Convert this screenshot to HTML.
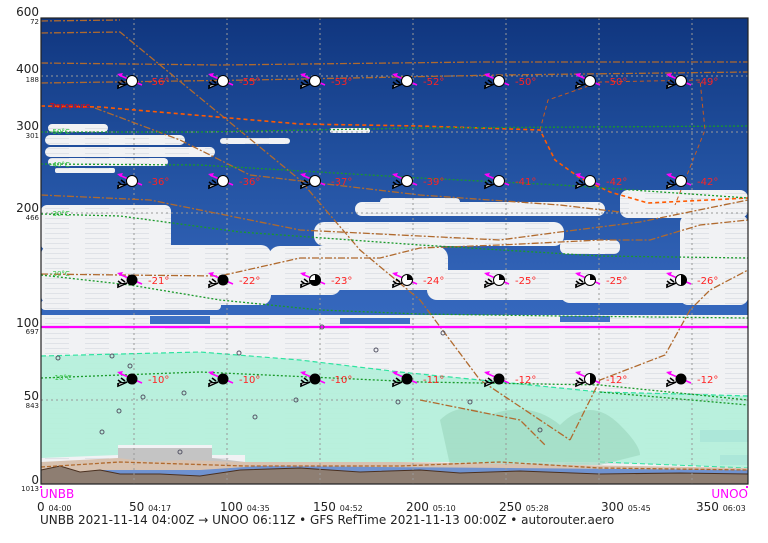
<!DOCTYPE html>
<html><head><meta charset="utf-8"><style>
html,body{margin:0;padding:0;background:#fff;width:768px;height:543px;overflow:hidden}
svg{display:block}
text{font-family:"DejaVu Sans","Liberation Sans",sans-serif}
</style></head><body>
<svg width="768" height="543" viewBox="0 0 768 543" xmlns="http://www.w3.org/2000/svg">
<defs>
<linearGradient id="sky" x1="0" y1="0" x2="0" y2="1">
<stop offset="0" stop-color="#10367f"/><stop offset="0.3" stop-color="#21509f"/><stop offset="0.6" stop-color="#3466bb"/><stop offset="1" stop-color="#3e72c6"/></linearGradient>
<pattern id="cl" width="40" height="5" patternUnits="userSpaceOnUse"><rect width="40" height="5" fill="#f1f2f4"/><rect x="5" y="3" width="24" height="1" fill="#dfe2e7"/></pattern>
<g id="bw"><line x1="-13" y1="-6" x2="10" y2="4" stroke="#f0f" stroke-width="1.6"/><path d="M-15,-7 l6,-1 l-2,4z" fill="#f0f"/><path d="M-5,3 l-9,4 l0,-3 M-7,2 l-4,-3 M-10,4 l-4,-3" stroke="#000" stroke-width="1.6" fill="none"/><path d="M-14,7 l9,-4 l-8,1z" fill="#fff" stroke="#000" stroke-width="1"/></g>
</defs>
<rect x="41" y="18" width="707" height="466" fill="url(#sky)"/>
<!-- clouds -->
<g fill="url(#cl)">
<rect x="48" y="124" width="60" height="8" rx="4"/>
<rect x="45" y="135" width="140" height="10" rx="5"/>
<rect x="45" y="147" width="170" height="10" rx="5"/>
<rect x="48" y="158" width="120" height="8" rx="4"/>
<rect x="55" y="168" width="60" height="5" rx="2"/>
<rect x="220" y="138" width="70" height="6" rx="3"/>
<rect x="330" y="128" width="40" height="5" rx="2"/>
<!-- left big cloud -->
<rect x="41" y="205" width="130" height="45" rx="6"/>
<rect x="41" y="245" width="230" height="60" rx="10"/>
<rect x="41" y="265" width="300" height="30" rx="10"/>
<rect x="41" y="300" width="180" height="10" rx="4"/>
<!-- middle -->
<rect x="355" y="202" width="250" height="14" rx="7"/>
<rect x="380" y="198" width="80" height="8" rx="4"/>
<rect x="314" y="222" width="250" height="24" rx="10"/>
<rect x="268" y="246" width="180" height="44" rx="12"/>
<rect x="427" y="270" width="170" height="30" rx="10"/>
<rect x="560" y="270" width="188" height="33" rx="10"/>
<rect x="620" y="190" width="128" height="28" rx="8"/>
<rect x="680" y="215" width="68" height="90" rx="8"/>
<rect x="560" y="240" width="60" height="14" rx="6"/>
<!-- bottom strip -->
<rect x="41" y="315" width="707" height="170"/>
</g>
<path d="M150,316 h60 v8 h-60z M340,318 h70 v6 h-70z M560,316 h50 v6 h-50z" fill="#3e72c6"/>
<path d="M700,430 h48 v12 h-48z M720,455 h28 v10 h-28z" fill="#4b86cf"/>
<!-- green region -->
<path d="M41,356 L120,354 L200,352 L300,360 L400,372 L480,380 L560,388 L600,392 L680,394 L748,396 L748,468 L600,462 L520,462 L400,462 L290,462 L245,462 L245,455 L212,455 L212,445 L118,445 L118,455 L41,458Z" fill="#b4f0da" opacity="0.92"/>
<path d="M41,356 L120,354 L200,352 L300,360 L400,372 L480,380 L560,388 L600,392 L680,394 L748,396" stroke="#2fe3a0" stroke-width="1.2" stroke-dasharray="5,3" fill="none"/>
<path d="M600,462 L748,468" stroke="#2fe3a0" stroke-dasharray="5,3" fill="none"/>
<path d="M440,420 q20,-20 50,-5 q40,-15 70,10 q30,-30 60,0 q20,20 20,30 l-40,10 l-150,0z" fill="#9ed8c0" opacity="0.7"/>
<!-- terrain -->
<path d="M118,448 L212,448 L212,458 L245,462 L245,484 L118,484z" fill="#c4c4c4"/>
<path d="M41,462 L118,458 L150,462 L180,460 L245,462 L400,462 L748,468 L748,484 L41,484z" fill="#d8c2b0"/>
<path d="M95,470 L200,470 L260,466 L748,470 L748,476 L95,476z" fill="#6f92d0"/>
<path d="M41,470 L60,466 L80,472 L100,470 L120,474 L160,474 L200,476 L240,470 L300,468 L360,472 L420,470 L460,473 L520,471 L600,474 L680,473 L748,474 L748,484 L41,484z" fill="#8e7e72" stroke="#4a3020" stroke-width="1"/>
<!-- grid -->
<g stroke="#999" stroke-width="1" stroke-dasharray="2,3">
<line x1="134" y1="18" x2="134" y2="484"/><line x1="227" y1="18" x2="227" y2="484"/><line x1="320" y1="18" x2="320" y2="484"/><line x1="413" y1="18" x2="413" y2="484"/><line x1="506" y1="18" x2="506" y2="484"/><line x1="599" y1="18" x2="599" y2="484"/><line x1="692" y1="18" x2="692" y2="484"/>
<line x1="41" y1="76" x2="748" y2="76"/><line x1="41" y1="132" x2="748" y2="132"/><line x1="41" y1="213" x2="748" y2="213"/><line x1="41" y1="400" x2="748" y2="400"/>
</g>
<!-- brown dash-dot lines -->
<g stroke="#b06a2e" stroke-width="1.3" stroke-dasharray="7,2,2,2" fill="none">
<path d="M41,21 L120,20"/>
<path d="M41,33 L120,32 L300,180 L360,250 L420,300 L480,380 L570,440"/>
<path d="M41,63 L220,65 L480,62 L748,62"/>
<path d="M41,83 L250,80 L500,75 L748,72"/>
<path d="M95,108 L180,140 L250,175 L420,195 L560,205 L620,212"/>
<path d="M41,195 L150,200 L300,230 L500,240 L560,232 L640,222 L748,200"/>
<path d="M41,274 L120,275 L220,276 L300,258 L380,258 L420,248 L500,245 L600,240 L650,240 L700,225 L748,220"/>
<path d="M570,440 L600,380 L665,355 L690,310 L710,290 L748,270"/>
<path d="M420,400 L520,420 L545,445"/>
<path d="M41,467 L120,462 L245,466 L400,466 L500,462 L600,468 L748,470" stroke-dasharray="4,2"/>
</g>
<!-- tropopause -->
<path d="M41,106 L100,107 L300,124 L420,126 L540,130 L555,160 L580,178 L610,192 L648,203 L748,198" stroke="#ff5a00" stroke-width="1.6" stroke-dasharray="4,3" fill="none"/>
<path d="M540,130 L548,100 L600,82 L700,80 L705,130 L675,205" stroke="#c65a20" stroke-width="1" stroke-dasharray="4,3" fill="none"/>
<!-- isotherms -->
<g stroke="#1a9a2a" stroke-width="1.3" stroke-dasharray="2,2" fill="none">
<path d="M41,132 L200,132 L420,128 L748,126"/>
<path d="M41,164 L200,165 L420,178 L560,185 L748,198"/>
<path d="M41,214 L120,216 L240,232 L420,245 L600,256 L748,258"/>
<path d="M41,275 L130,285 L220,300 L320,310 L420,314 L560,316 L748,318"/>
<path d="M41,378 L200,372 L420,382 L600,385 L748,400"/>
<path d="M600,392 L748,405"/>
</g>
<g font-size="7" fill="#2ec23e"><text x="50" y="134">-50°C</text><text x="50" y="167">-40°C</text><text x="50" y="216">-30°C</text><text x="50" y="276">-20°C</text><text x="52" y="380">-10°C</text></g>
<text x="50" y="108" font-size="7" fill="#f00">Tropopause</text>
<!-- freezing level magenta -->
<line x1="41" y1="327" x2="748" y2="327" stroke="#f0f" stroke-width="2.2"/>
<!-- small circles -->
<g fill="none" stroke="#556" stroke-width="1"><circle cx="58" cy="358" r="2"/><circle cx="112" cy="356" r="2"/><circle cx="130" cy="366" r="2"/><circle cx="143" cy="397" r="2"/><circle cx="119" cy="411" r="2"/><circle cx="102" cy="432" r="2"/><circle cx="184" cy="393" r="2"/><circle cx="239" cy="353" r="2"/><circle cx="255" cy="417" r="2"/><circle cx="296" cy="400" r="2"/><circle cx="322" cy="327" r="2"/><circle cx="376" cy="350" r="2"/><circle cx="443" cy="333" r="2"/><circle cx="470" cy="402" r="2"/><circle cx="540" cy="430" r="2"/><circle cx="398" cy="402" r="2"/><circle cx="180" cy="452" r="2"/></g>
<!-- station symbols -->
<g font-size="10" fill="#f22">
<g transform="translate(132,81)"><use href="#bw"/><circle r="5.5" fill="#fff" stroke="#000"/><text x="16" y="4">-56°</text></g>
<g transform="translate(223,81)"><use href="#bw"/><circle r="5.5" fill="#fff" stroke="#000"/><text x="16" y="4">-55°</text></g>
<g transform="translate(315,81)"><use href="#bw"/><circle r="5.5" fill="#fff" stroke="#000"/><text x="16" y="4">-53°</text></g>
<g transform="translate(407,81)"><use href="#bw"/><circle r="5.5" fill="#fff" stroke="#000"/><text x="16" y="4">-52°</text></g>
<g transform="translate(499,81)"><use href="#bw"/><circle r="5.5" fill="#fff" stroke="#000"/><text x="16" y="4">-50°</text></g>
<g transform="translate(590,81)"><use href="#bw"/><circle r="5.5" fill="#fff" stroke="#000"/><text x="16" y="4">-50°</text></g>
<g transform="translate(681,81)"><use href="#bw"/><circle r="5.5" fill="#fff" stroke="#000"/><text x="16" y="4">-49°</text></g>
<g transform="translate(132,181)"><use href="#bw"/><circle r="5.5" fill="#fff" stroke="#000"/><text x="16" y="4">-36°</text></g>
<g transform="translate(223,181)"><use href="#bw"/><circle r="5.5" fill="#fff" stroke="#000"/><text x="16" y="4">-36°</text></g>
<g transform="translate(315,181)"><use href="#bw"/><circle r="5.5" fill="#fff" stroke="#000"/><text x="16" y="4">-37°</text></g>
<g transform="translate(407,181)"><use href="#bw"/><circle r="5.5" fill="#fff" stroke="#000"/><text x="16" y="4">-39°</text></g>
<g transform="translate(499,181)"><use href="#bw"/><circle r="5.5" fill="#fff" stroke="#000"/><text x="16" y="4">-41°</text></g>
<g transform="translate(590,181)"><use href="#bw"/><circle r="5.5" fill="#fff" stroke="#000"/><text x="16" y="4">-42°</text></g>
<g transform="translate(681,181)"><use href="#bw"/><circle r="5.5" fill="#fff" stroke="#000"/><text x="16" y="4">-42°</text></g>
<g transform="translate(132,280)"><use href="#bw"/><circle r="5.5" fill="#000"/><text x="16" y="4">-21°</text></g>
<g transform="translate(223,280)"><use href="#bw"/><circle r="5.5" fill="#000"/><text x="16" y="4">-22°</text></g>
<g transform="translate(315,280)"><use href="#bw"/><circle r="5.5" fill="#fff" stroke="#000"/><path d="M0,0 V-5.5 A5.5,5.5 0 1,1 -5.5,0z" fill="#000"/><text x="16" y="4">-23°</text></g>
<g transform="translate(407,280)"><use href="#bw"/><circle r="5.5" fill="#fff" stroke="#000"/><path d="M0,0 V-5.5 A5.5,5.5 0 0,1 5.5,0z" fill="#000"/><text x="16" y="4">-24°</text></g>
<g transform="translate(499,280)"><use href="#bw"/><circle r="5.5" fill="#fff" stroke="#000"/><path d="M0,0 V-5.5 A5.5,5.5 0 0,1 5.5,0z" fill="#000"/><text x="16" y="4">-25°</text></g>
<g transform="translate(590,280)"><use href="#bw"/><circle r="5.5" fill="#fff" stroke="#000"/><path d="M0,0 V-5.5 A5.5,5.5 0 0,1 5.5,0z" fill="#000"/><text x="16" y="4">-25°</text></g>
<g transform="translate(681,280)"><use href="#bw"/><circle r="5.5" fill="#fff" stroke="#000"/><path d="M0,-5.5 A5.5,5.5 0 0,1 0,5.5z" fill="#000"/><text x="16" y="4">-26°</text></g>
<g transform="translate(132,379)"><use href="#bw"/><circle r="5.5" fill="#000"/><text x="16" y="4">-10°</text></g>
<g transform="translate(223,379)"><use href="#bw"/><circle r="5.5" fill="#000"/><text x="16" y="4">-10°</text></g>
<g transform="translate(315,379)"><use href="#bw"/><circle r="5.5" fill="#000"/><text x="16" y="4">-10°</text></g>
<g transform="translate(407,379)"><use href="#bw"/><circle r="5.5" fill="#000"/><text x="16" y="4">-11°</text></g>
<g transform="translate(499,379)"><use href="#bw"/><circle r="5.5" fill="#000"/><text x="16" y="4">-12°</text></g>
<g transform="translate(590,379)"><use href="#bw"/><circle r="5.5" fill="#fff" stroke="#000"/><path d="M0,-5.5 A5.5,5.5 0 0,1 0,5.5z" fill="#000"/><text x="16" y="4">-12°</text></g>
<g transform="translate(681,379)"><use href="#bw"/><circle r="5.5" fill="#000"/><text x="16" y="4">-12°</text></g>
</g>
<rect x="41" y="18" width="707" height="466" fill="none" stroke="#222" stroke-width="1.2"/>
<!-- axis labels -->
<g fill="#222" text-anchor="end">
<g font-size="12"><text x="39" y="16">600</text><text x="39" y="73">400</text><text x="39" y="130">300</text><text x="39" y="212">200</text><text x="39" y="327">100</text><text x="39" y="400">50</text><text x="39" y="484">0</text></g>
<g font-size="7"><text x="39" y="24">72</text><text x="39" y="82">188</text><text x="39" y="138">301</text><text x="39" y="220">466</text><text x="39" y="334">697</text><text x="39" y="408">843</text><text x="39" y="491">1013</text></g>
</g>
<rect x="40" y="486" width="2" height="2" fill="#f0f"/><rect x="746" y="486" width="2" height="2" fill="#f0f"/>
<text x="40" y="498" font-size="12" fill="#f0f">UNBB</text>
<text x="748" y="498" font-size="12" fill="#f0f" text-anchor="end">UNOO</text>
<g fill="#222" font-size="12">
<text x="37" y="511">0 <tspan font-size="8">04:00</tspan></text>
<text x="129" y="511">50 <tspan font-size="8">04:17</tspan></text>
<text x="220" y="511">100 <tspan font-size="8">04:35</tspan></text>
<text x="313" y="511">150 <tspan font-size="8">04:52</tspan></text>
<text x="406" y="511">200 <tspan font-size="8">05:10</tspan></text>
<text x="499" y="511">250 <tspan font-size="8">05:28</tspan></text>
<text x="601" y="511">300 <tspan font-size="8">05:45</tspan></text>
<text x="696" y="511">350 <tspan font-size="8">06:03</tspan></text>
<text x="40" y="524">UNBB 2021-11-14 04:00Z → UNOO 06:11Z • GFS RefTime 2021-11-13 00:00Z • autorouter.aero</text>
</g>
</svg>
</body></html>
